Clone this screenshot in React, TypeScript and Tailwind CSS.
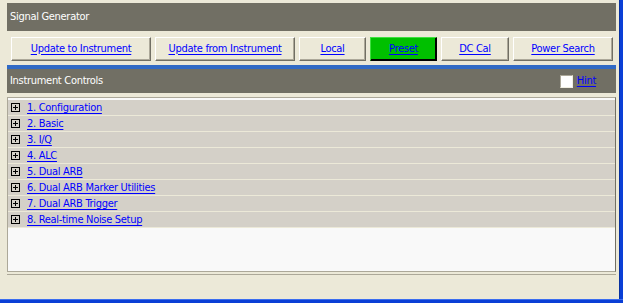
const buttons = [
  { label: 'Update to Instrument', w: 'w-[140px]' },
  { label: 'Update from Instrument', w: 'w-[140px]' },
  { label: 'Local', w: 'w-[67px]' },
  { label: 'Preset', w: 'w-[67px]', active: true },
  { label: 'DC Cal', w: 'w-[68px]' },
  { label: 'Power Search', w: 'w-[100px]' },
];

const sections = [
  '1. Configuration',
  '2. Basic',
  '3. I/Q',
  '4. ALC',
  '5. Dual ARB',
  '6. Dual ARB Marker Utilities',
  '7. Dual ARB Trigger',
  '8. Real-time Noise Setup',
];

function PlusBox() {
  return (
    <svg width="9" height="9" viewBox="0 0 9 9" className="shrink-0">
      <rect x="0.5" y="0.5" width="8" height="8" fill="none" stroke="#000" />
      <path d="M2 4.5h5M4.5 2v5" stroke="#000" />
    </svg>
  );
}

export default function App() {
  return (
    <div
      className="w-[623px] h-[303px] flex flex-col bg-[#ECE9D8] text-[11px] tracking-[-0.3px] overflow-hidden"
      style={{ fontFamily: '"DejaVu Sans Condensed", "Liberation Sans", Arial, sans-serif' }}
    >
      <div className="flex flex-1 min-h-0">
        <div className="flex-1 flex flex-col pt-[3px] pl-[7px] pr-[3px] min-w-0">
          {/* Title bar */}
          <div className="h-[28px] bg-[#716F64] text-white flex items-center pl-[3px]">
            Signal Generator
          </div>

          {/* Action buttons */}
          <div className="flex gap-[4px] pl-[4px] mt-[6px] h-[24px]">
            {buttons.map(b => (
              <button
                key={b.label}
                className={`${b.w} h-full flex items-center justify-center border ${
                  b.active
                    ? 'bg-[#00C000] border-t-[#40E040] border-l-[#40E040] border-b-black border-r-black shadow-[inset_-1px_-1px_0_#000]'
                    : 'bg-[#ECE9D8] border-t-white border-l-white border-b-[#716F64] border-r-[#716F64] shadow-[inset_-1px_-1px_0_#ACA899]'
                }`}
              >
                <span className="text-[#0000FF] underline underline-offset-2">{b.label}</span>
              </button>
            ))}
          </div>

          <div className="mt-[4px] h-[4px] bg-[#316AC5]" />

          {/* Instrument controls header */}
          <div className="h-[24px] bg-[#716F64] text-white flex items-center justify-between pl-[3px] pr-[20px]">
            <span>Instrument Controls</span>
            <div className="flex items-center gap-[4px]">
              <span className="w-[13px] h-[13px] bg-white border border-t-[#ACA899] border-l-[#ACA899] border-b-[#F1EFE2] border-r-[#F1EFE2]" />
              <span className="text-[#0000FF] underline underline-offset-2">Hint</span>
            </div>
          </div>

          {/* Section list */}
          <div className="mt-[4px] h-[175px] border border-[#ACA899] border-r-[#716F64] bg-[#F9F9F9] flex flex-col pt-[2px]">
            {sections.map(s => (
              <div
                key={s}
                className="h-[16px] bg-[#D4D0C8] border-b border-[#ECE9D8] flex items-center gap-[7px] pl-[3px]"
              >
                <PlusBox />
                <span className="text-[#0000FF] underline underline-offset-2 leading-none">{s}</span>
              </div>
            ))}
          </div>

          <div className="mt-[2px] h-[1px] bg-[#ACA899]" />
        </div>
        <div className="w-[4px] bg-[#0A3FD6] border-l border-[#0831A0]" />
      </div>
      <div className="h-[4px] bg-[#0A3FD6] border-t border-[#3C6EF0]" />
    </div>
  );
}
